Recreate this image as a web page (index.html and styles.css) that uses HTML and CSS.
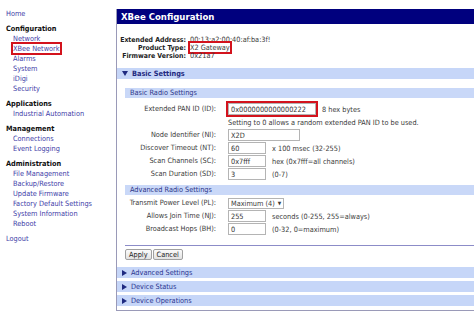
FILE: index.html
```html
<!DOCTYPE html>
<html lang="en">
<head>
    <meta charset="UTF-8">
    <meta name="viewport" content="width=device-width, initial-scale=1.0">
    <title>XBee Configuration</title>
    <link rel="stylesheet" href="styles.css">
</head>
<body>

<div class="page">
    <!-- left navigation -->
    <div class="sidebar">
        <a href="#">Home</a>
        <div class="nav-group">
            <div class="nav-title">Configuration</div>
            <a href="#">Network</a>
            <a href="#"><span class="marked">XBee Network</span></a>
            <a href="#">Alarms</a>
            <a href="#">System</a>
            <a href="#">iDigi</a>
            <a href="#">Security</a>
        </div>
        <div class="nav-group">
            <div class="nav-title">Applications</div>
            <a href="#">Industrial Automation</a>
        </div>
        <div class="nav-group">
            <div class="nav-title">Management</div>
            <a href="#">Connections</a>
            <a href="#">Event Logging</a>
        </div>
        <div class="nav-group">
            <div class="nav-title">Administration</div>
            <a href="#">File Management</a>
            <a href="#">Backup/Restore</a>
            <a href="#">Update Firmware</a>
            <a href="#">Factory Default Settings</a>
            <a href="#">System Information</a>
            <a href="#">Reboot</a>
        </div>
        <a href="#" class="nav-logout">Logout</a>
    </div>

    <!-- main panel -->
    <div class="main">
        <div class="main-header">XBee Configuration</div>

        <div class="info">
            <span class="info-label">Extended Address:</span>
            <span>00:13:a2:00:40:af:ba:3f!</span>
            <span class="info-label">Product Type:</span>
            <span><span class="marked">X2 Gateway</span></span>
            <span class="info-label">Firmware Version:</span>
            <span>0x21a7</span>
        </div>

        <div class="bar bar-open">
            <svg class="arrow" width="6" height="5" viewBox="0 0 6 5"><path d="M0 0H6L3 5Z" fill="#1f2a80"/></svg>
            Basic Settings
        </div>

        <div class="section">
            <div class="subbar">Basic Radio Settings</div>
            <div class="form">
                <label>Extended PAN ID (ID):</label>
                <div class="field">
                    <input type="text" class="in-pan marked" value="0x0000000000000222">
                    <span class="hint">8 hex bytes</span>
                </div>
                <span></span>
                <div class="field note">Setting to 0 allows a random extended PAN ID to be used.</div>
                <label>Node Identifier (NI):</label>
                <div class="field"><input type="text" class="in-mid" value="X2D"></div>
                <label>Discover Timeout (NT):</label>
                <div class="field">
                    <input type="text" class="in-small" value="60">
                    <span class="hint">x 100 msec (32-255)</span>
                </div>
                <label>Scan Channels (SC):</label>
                <div class="field">
                    <input type="text" class="in-small" value="0x7fff">
                    <span class="hint">hex (0x7fff=all channels)</span>
                </div>
                <label>Scan Duration (SD):</label>
                <div class="field">
                    <input type="text" class="in-small" value="3">
                    <span class="hint">(0-7)</span>
                </div>
            </div>

            <div class="subbar">Advanced Radio Settings</div>
            <div class="form form-last">
                <label>Transmit Power Level (PL):</label>
                <div class="field">
                    <div class="select">Maximum (4) <span class="caret">&#9660;</span></div>
                </div>
                <label>Allows Join Time (NJ):</label>
                <div class="field">
                    <input type="text" class="in-small" value="255">
                    <span class="hint">seconds (0-255, 255=always)</span>
                </div>
                <label>Broadcast Hops (BH):</label>
                <div class="field">
                    <input type="text" class="in-small" value="0">
                    <span class="hint">(0-32, 0=maximum)</span>
                </div>
            </div>
        </div>

        <div class="actions">
            <button type="submit">Apply</button>
            <button type="button">Cancel</button>
        </div>

        <div class="bar">
            <svg class="arrow" width="5" height="6" viewBox="0 0 5 6"><path d="M0 0L5 3L0 6Z" fill="#1f2a80"/></svg>
            Advanced Settings
        </div>
        <div class="bar">
            <svg class="arrow" width="5" height="6" viewBox="0 0 5 6"><path d="M0 0L5 3L0 6Z" fill="#1f2a80"/></svg>
            Device Status
        </div>
        <div class="bar">
            <svg class="arrow" width="5" height="6" viewBox="0 0 5 6"><path d="M0 0L5 3L0 6Z" fill="#1f2a80"/></svg>
            Device Operations
        </div>
    </div>
</div>

</body>
</html>
```

FILE: styles.css
```css
body {
    margin: 0;
    font-family: "DejaVu Sans Condensed", "DejaVu Sans", sans-serif;
    font-size: 7.3px;
    color: #3a3a3a;
    background-color: #fff;
    overflow: hidden;
}

.page {
    display: flex;
    align-items: flex-start;
}

/* sidebar */
.sidebar {
    width: 116px;
    flex: none;
    box-sizing: border-box;
    padding: 9px 0 0 6px;
    line-height: 10px;
}

.sidebar a {
    display: block;
    color: #4040a8;
    text-decoration: none;
}

.nav-group {
    margin-top: 5px;
}

.nav-group a {
    padding-left: 7px;
}

.nav-title {
    font-weight: bold;
    color: #111;
}

.nav-logout {
    margin-top: 5px;
}

.marked {
    outline: 2px solid #d3131d;
}

/* main panel */
.main {
    flex: 1;
    margin-top: 9px;
    padding-bottom: 4px;
    border-left: 1px solid #9a9ab8;
    border-bottom: 1px solid #9a9ab8;
}

.main-header {
    height: 15px;
    line-height: 15px;
    padding-left: 4px;
    background-color: #00007e;
    color: #fff;
    font-size: 9.5px;
    font-weight: bold;
}

.info {
    display: grid;
    grid-template-columns: 69px auto;
    column-gap: 4px;
    padding-top: 12px;
    line-height: 8px;
    white-space: nowrap;
}

.info-label {
    text-align: right;
    font-size: 6.9px;
    font-weight: bold;
    color: #222;
}

.bar {
    display: flex;
    align-items: center;
    height: 11px;
    margin-top: 3px;
    padding-left: 5px;
    background-color: #c6d6f8;
    color: #2a3590;
}

.bar-open {
    margin-top: 8px;
    font-weight: bold;
    color: #1f2a80;
}

.bar .arrow {
    margin-right: 4px;
}

.section {
    margin: 9px 0 0 8px;
    border-bottom: 1px solid #8c8cc8;
}

.subbar {
    height: 10px;
    line-height: 10px;
    padding-left: 5px;
    background-color: #c9d8f8;
    color: #2c3588;
}

.form {
    display: grid;
    grid-template-columns: 91px auto;
    column-gap: 12px;
    row-gap: 1px;
    padding: 5px 0;
    white-space: nowrap;
}

.form-last {
    padding: 2px 0 10px;
}

.form label {
    text-align: right;
    line-height: 12px;
}

.field {
    display: flex;
    align-items: center;
    height: 12px;
}

input[type="text"] {
    height: 12px;
    box-sizing: border-box;
    margin: 0;
    padding: 0 2px;
    border: 1px solid #b4b4b4;
    font-family: inherit;
    font-size: 7.3px;
    color: #333;
}

.in-pan {
    width: 88px;
}

.in-mid {
    width: 72px;
}

.in-small {
    width: 38px;
}

.hint {
    margin-left: 6px;
}

.select {
    display: flex;
    align-items: center;
    height: 11px;
    box-sizing: border-box;
    padding: 0 2px;
    border: 1px solid #b4b4b4;
}

.caret {
    margin-left: 3px;
    font-size: 5px;
}

.actions {
    display: flex;
    gap: 1px;
    margin: 3px 0 7px 8px;
}

.actions button {
    height: 11px;
    padding: 0 3px;
    border: 1px solid #a0a0a0;
    border-radius: 2px;
    background: linear-gradient(#fbfbfb, #e2e2e2);
    font-family: inherit;
    font-size: 7.3px;
    color: #222;
}
```
